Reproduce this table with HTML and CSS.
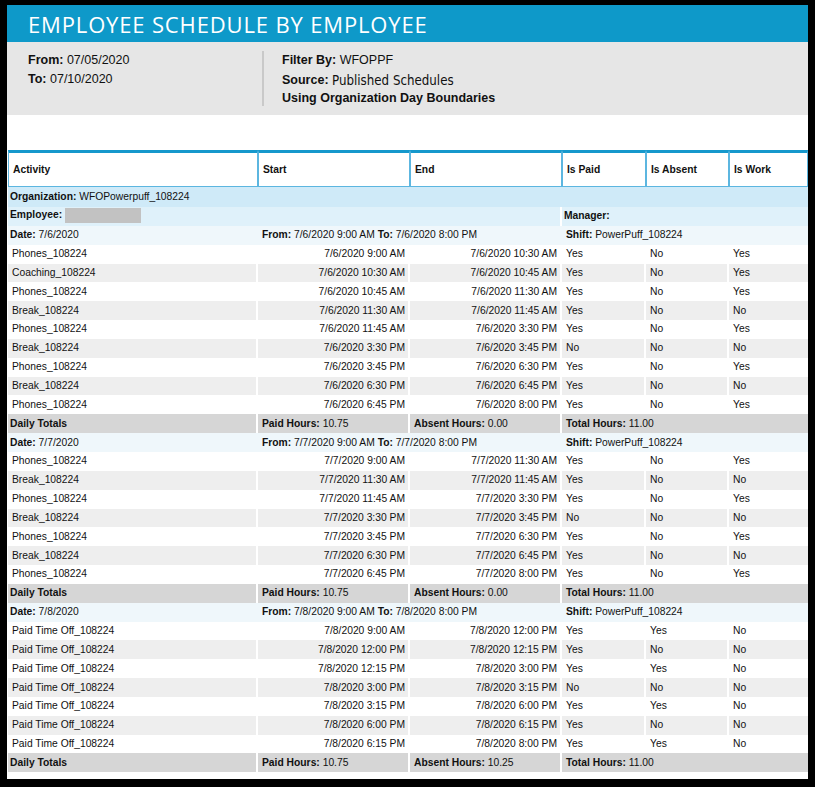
FILE: index.html
```html
<!DOCTYPE html>
<html>
<head>
<meta charset="utf-8">
<title>Employee Schedule By Employee</title>
<link rel="stylesheet" href="styles.css">
</head>
<body>
<div class="frame">
  <div class="title-bar"><h1>EMPLOYEE SCHEDULE BY EMPLOYEE</h1></div>
  <div class="info">
    <div class="info-col left">
      <div class="line"><b>From:</b> 07/05/2020</div>
      <div class="line"><b>To:</b> 07/10/2020</div>
    </div>
    <div class="divider"></div>
    <div class="info-col right">
      <div class="line"><b>Filter By:</b> WFOPPF</div>
      <div class="line"><b>Source:</b> <span class="narrow">Published Schedules</span></div>
      <div class="line"><b>Using Organization Day Boundaries</b></div>
    </div>
  </div>
  <table class="report">
    <colgroup>
      <col class="c-act"><col class="c-start"><col class="c-end"><col class="c-paid"><col class="c-abs"><col class="c-work">
    </colgroup>
    <thead>
      <tr><th>Activity</th><th>Start</th><th>End</th><th>Is Paid</th><th>Is Absent</th><th>Is Work</th></tr>
    </thead>
    <tbody>
      <tr class="org"><td colspan="6"><b>Organization:</b> WFOPowerpuff_108224</td></tr>
      <tr class="emp"><td colspan="3"><b>Employee:</b> <span class="redact"></span></td><td colspan="3"><b>Manager:</b></td></tr>

      <tr class="date"><td><b>Date:</b> 7/6/2020</td><td colspan="2"><b>From:</b> 7/6/2020 9:00 AM <b>To:</b> 7/6/2020 8:00 PM</td><td colspan="3"><b>Shift:</b> PowerPuff_108224</td></tr>
      <tr><td>Phones_108224</td><td class="t">7/6/2020 9:00 AM</td><td class="t">7/6/2020 10:30 AM</td><td>Yes</td><td>No</td><td>Yes</td></tr>
      <tr class="alt"><td>Coaching_108224</td><td class="t">7/6/2020 10:30 AM</td><td class="t">7/6/2020 10:45 AM</td><td>Yes</td><td>No</td><td>Yes</td></tr>
      <tr><td>Phones_108224</td><td class="t">7/6/2020 10:45 AM</td><td class="t">7/6/2020 11:30 AM</td><td>Yes</td><td>No</td><td>Yes</td></tr>
      <tr class="alt"><td>Break_108224</td><td class="t">7/6/2020 11:30 AM</td><td class="t">7/6/2020 11:45 AM</td><td>Yes</td><td>No</td><td>No</td></tr>
      <tr><td>Phones_108224</td><td class="t">7/6/2020 11:45 AM</td><td class="t">7/6/2020 3:30 PM</td><td>Yes</td><td>No</td><td>Yes</td></tr>
      <tr class="alt"><td>Break_108224</td><td class="t">7/6/2020 3:30 PM</td><td class="t">7/6/2020 3:45 PM</td><td>No</td><td>No</td><td>No</td></tr>
      <tr><td>Phones_108224</td><td class="t">7/6/2020 3:45 PM</td><td class="t">7/6/2020 6:30 PM</td><td>Yes</td><td>No</td><td>Yes</td></tr>
      <tr class="alt"><td>Break_108224</td><td class="t">7/6/2020 6:30 PM</td><td class="t">7/6/2020 6:45 PM</td><td>Yes</td><td>No</td><td>No</td></tr>
      <tr><td>Phones_108224</td><td class="t">7/6/2020 6:45 PM</td><td class="t">7/6/2020 8:00 PM</td><td>Yes</td><td>No</td><td>Yes</td></tr>
      <tr class="tot"><td><b>Daily Totals</b></td><td><b>Paid Hours:</b> 10.75</td><td><b>Absent Hours:</b> 0.00</td><td colspan="3"><b>Total Hours:</b> 11.00</td></tr>

      <tr class="date"><td><b>Date:</b> 7/7/2020</td><td colspan="2"><b>From:</b> 7/7/2020 9:00 AM <b>To:</b> 7/7/2020 8:00 PM</td><td colspan="3"><b>Shift:</b> PowerPuff_108224</td></tr>
      <tr><td>Phones_108224</td><td class="t">7/7/2020 9:00 AM</td><td class="t">7/7/2020 11:30 AM</td><td>Yes</td><td>No</td><td>Yes</td></tr>
      <tr class="alt"><td>Break_108224</td><td class="t">7/7/2020 11:30 AM</td><td class="t">7/7/2020 11:45 AM</td><td>Yes</td><td>No</td><td>No</td></tr>
      <tr><td>Phones_108224</td><td class="t">7/7/2020 11:45 AM</td><td class="t">7/7/2020 3:30 PM</td><td>Yes</td><td>No</td><td>Yes</td></tr>
      <tr class="alt"><td>Break_108224</td><td class="t">7/7/2020 3:30 PM</td><td class="t">7/7/2020 3:45 PM</td><td>No</td><td>No</td><td>No</td></tr>
      <tr><td>Phones_108224</td><td class="t">7/7/2020 3:45 PM</td><td class="t">7/7/2020 6:30 PM</td><td>Yes</td><td>No</td><td>Yes</td></tr>
      <tr class="alt"><td>Break_108224</td><td class="t">7/7/2020 6:30 PM</td><td class="t">7/7/2020 6:45 PM</td><td>Yes</td><td>No</td><td>No</td></tr>
      <tr><td>Phones_108224</td><td class="t">7/7/2020 6:45 PM</td><td class="t">7/7/2020 8:00 PM</td><td>Yes</td><td>No</td><td>Yes</td></tr>
      <tr class="tot"><td><b>Daily Totals</b></td><td><b>Paid Hours:</b> 10.75</td><td><b>Absent Hours:</b> 0.00</td><td colspan="3"><b>Total Hours:</b> 11.00</td></tr>

      <tr class="date"><td><b>Date:</b> 7/8/2020</td><td colspan="2"><b>From:</b> 7/8/2020 9:00 AM <b>To:</b> 7/8/2020 8:00 PM</td><td colspan="3"><b>Shift:</b> PowerPuff_108224</td></tr>
      <tr><td>Paid Time Off_108224</td><td class="t">7/8/2020 9:00 AM</td><td class="t">7/8/2020 12:00 PM</td><td>Yes</td><td>Yes</td><td>No</td></tr>
      <tr class="alt"><td>Paid Time Off_108224</td><td class="t">7/8/2020 12:00 PM</td><td class="t">7/8/2020 12:15 PM</td><td>Yes</td><td>No</td><td>No</td></tr>
      <tr><td>Paid Time Off_108224</td><td class="t">7/8/2020 12:15 PM</td><td class="t">7/8/2020 3:00 PM</td><td>Yes</td><td>Yes</td><td>No</td></tr>
      <tr class="alt"><td>Paid Time Off_108224</td><td class="t">7/8/2020 3:00 PM</td><td class="t">7/8/2020 3:15 PM</td><td>No</td><td>No</td><td>No</td></tr>
      <tr><td>Paid Time Off_108224</td><td class="t">7/8/2020 3:15 PM</td><td class="t">7/8/2020 6:00 PM</td><td>Yes</td><td>Yes</td><td>No</td></tr>
      <tr class="alt"><td>Paid Time Off_108224</td><td class="t">7/8/2020 6:00 PM</td><td class="t">7/8/2020 6:15 PM</td><td>Yes</td><td>No</td><td>No</td></tr>
      <tr><td>Paid Time Off_108224</td><td class="t">7/8/2020 6:15 PM</td><td class="t">7/8/2020 8:00 PM</td><td>Yes</td><td>Yes</td><td>No</td></tr>
      <tr class="tot"><td><b>Daily Totals</b></td><td><b>Paid Hours:</b> 10.75</td><td><b>Absent Hours:</b> 10.25</td><td colspan="3"><b>Total Hours:</b> 11.00</td></tr>
    </tbody>
  </table>
</div>
</body>
</html>
```
FILE: styles.css
```css
html, body {
  margin: 0;
  padding: 0;
  background: #000;
}
body {
  padding: 5px 7px 8px 7px;
  font-family: "Liberation Sans", Arial, sans-serif;
  color: #111;
}
.frame {
  background: #fff;
  height: 774px;
  overflow: hidden;
}
.title-bar {
  height: 37px;
  background: #0e99c9;
  padding-left: 21px;
  display: flex;
  align-items: center;
}
.title-bar h1 {
  margin: 0;
  font-family: "Open Sans", "Noto Sans", sans-serif;
  font-weight: 400;
  font-size: 22px;
  letter-spacing: 0.85px;
  color: #fff;
  line-height: 1;
}
.info {
  height: 73px;
  box-sizing: border-box;
  background: #e6e6e6;
  display: flex;
  padding-top: 9px;
  font-size: 12.5px;
}
.info-col.left {
  width: 234px;
  padding-left: 21px;
}
.info-col.right {
  padding-left: 18px;
}
.line {
  height: 19px;
  line-height: 19px;
}
.narrow {
  font-family: "Liberation Sans Narrow", "DejaVu Sans Condensed", sans-serif;
  font-size: 13.2px;
  position: relative;
  top: 1px;
}
.divider {
  width: 2px;
  background: #c9c9c9;
  margin: 0 0 9px 0;
}
.report {
  margin: 35px 0 0 1px;
  width: 800px;
  border-collapse: separate;
  border-spacing: 0;
  table-layout: fixed;
  font-size: 10.3px;
}
.c-act { width: 250px; }
.c-start { width: 152px; }
.c-end { width: 152px; }
.c-paid { width: 84px; }
.c-abs { width: 83px; }
.c-work { width: 79px; }
.report th {
  height: 33px;
  padding: 0 4px;
  text-align: left;
  font-weight: bold;
  background: #fff;
  border-top: 3px solid #1598cc;
  border-left: 1px solid #5cb6e0;
  border-right: 1px solid #5cb6e0;
  border-bottom: 1px solid #5cb6e0;
}
.report td {
  height: 18.85px;
  padding: 0 3px 1px 4px;
  box-sizing: border-box;
  border-right: 2px solid #fff;
  white-space: nowrap;
  overflow: hidden;
  vertical-align: middle;
}
.report td:last-child { border-right: 0; }
.report td.t {
  text-align: right;
  padding-right: 3px;
}
.report tr.alt td { background: #eeeeee; }
.report tr.org td {
  height: 20px;
  background: #cfeaf8;
  padding-left: 2px;
}
.report tr.emp td {
  background: #dff1fa;
  padding-left: 2px;
}
.report tr.date td { background: #eff7fb; border-right-color: #eff7fb; }
.report tr.date td:first-child { padding-left: 2px; }
.report tr.tot td { background: #d6d6d6; }
.report tr.tot td:first-child { padding-left: 2px; }
.redact {
  display: inline-block;
  width: 76px;
  height: 15px;
  background: #c2c2c2;
  vertical-align: middle;
  margin-left: 0;
}
```
